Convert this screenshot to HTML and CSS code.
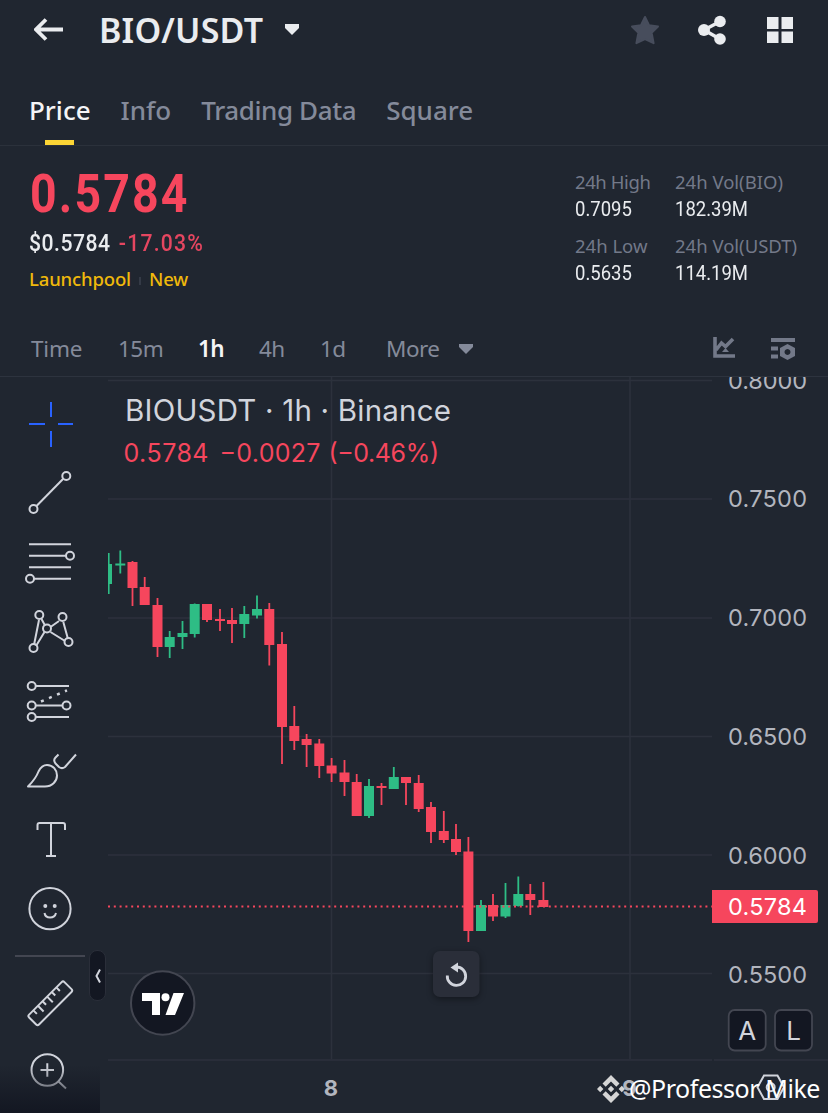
FILE: index.html
```html
<!DOCTYPE html>
<html lang="en">
<head>
    <meta charset="UTF-8">
    <meta name="viewport" content="width=device-width, initial-scale=1.0">
    <title>BIO/USDT</title>
    <link rel="stylesheet" href="styles.css">
</head>
<body>
    <!-- Header -->
    <div class="header">
        <svg class="back" width="30" height="24" viewBox="0 0 30 24"><path d="M12 1.5 2 11.5l10 10M2 11.5h27" fill="none" stroke="#eaecef" stroke-width="3.8"/></svg>
        <h1 class="pair">BIO/USDT</h1>
        <svg class="caret" width="16" height="12" viewBox="0 0 16 12"><path d="M1 0h14v4L8 11 1 4z" fill="#eaecef"/></svg>
        <div class="actions">
            <svg class="star" width="30" height="30" viewBox="0 0 30 30"><path d="m15 2 4 8.200 9 1.300-6.400 6.200 2 10.500L15 24.200l-8.600 4 2-10.500L2 11.500l9-1.300z" fill="#474d5c" stroke="#474d5c" stroke-width="2" stroke-linejoin="round"/></svg>
            <svg class="share" width="30" height="30" viewBox="0 0 30 30"><g fill="#eaecef"><circle cx="7" cy="15" r="6"/><circle cx="23" cy="6.500" r="5.800"/><circle cx="23" cy="24" r="5.800"/></g><path d="M23 6.500 7 15l16 9" fill="none" stroke="#eaecef" stroke-width="3.500"/></svg>
            <svg width="26" height="26" viewBox="0 0 26 26"><path d="M0 0h11.500v12H0zM14.500 0H26v12H14.500zM0 14.500h11.500V26H0zM14.500 14.500H26V26H14.500z" fill="#eaecef"/></svg>
        </div>
    </div>

    <!-- Tabs -->
    <div class="tabs">
        <span class="tab active">Price</span>
        <span class="tab">Info</span>
        <span class="tab trading">Trading Data</span>
        <span class="tab">Square</span>
    </div>

    <!-- Price summary -->
    <div class="summary">
        <div class="summary-left">
            <div class="last-price">0.5784</div>
            <div class="fiat"><span class="usd">$0.5784</span><span class="change">-17.03%</span></div>
            <div class="tags"><span class="tag">Launchpool</span><span class="tag-sep"></span><span class="tag">New</span></div>
        </div>
        <div class="stats">
            <div class="stat"><span class="label tight">24h High</span><span class="value">0.7095</span></div>
            <div class="stat"><span class="label">24h Vol(BIO)</span><span class="value">182.39M</span></div>
            <div class="stat"><span class="label">24h Low</span><span class="value">0.5635</span></div>
            <div class="stat"><span class="label">24h Vol(USDT)</span><span class="value">114.19M</span></div>
        </div>
    </div>

    <!-- Intervals -->
    <div class="intervals">
        <span class="i-time">Time</span>
        <span class="i-15m">15m</span>
        <span class="i-1h active">1h</span>
        <span class="i-4h">4h</span>
        <span class="i-1d">1d</span>
        <span class="i-more">More</span>
        <svg class="caret-small" width="14" height="10" viewBox="0 0 14 10"><path d="M0 0h14v3L7 10 0 3z" fill="#848a9a"/></svg>
        <div class="interval-icons">
            <svg width="22" height="22" viewBox="0 0 22 22"><path d="M2 0v19h20M3 13l5.500-7 4 3.500L20 2" fill="none" stroke="#737989" stroke-width="3.600"/><path d="M9 15l3.500-4 3.500 4z" fill="#737989"/></svg>
            <svg width="25" height="24" viewBox="0 0 25 24"><path d="M0 1h24v4H0zM0 9.500h7v4H0zM0 17.500h7v4H0z" fill="#737989"/><path d="m16.500 7 7.500 4v8l-7.500 4L9 19v-8zm0 5a3 3 0 1 0 .01 0z" fill="#737989" fill-rule="evenodd"/></svg>
        </div>
    </div>

    <!-- Chart area -->
    <div class="chart-area">
        <div class="toolbar">
            <div class="tools">
                <!-- Crosshair -->
                <svg class="tool cross" viewBox="0 -34 100 68"><path d="M51-22v15M51 7v16M29 0h16M58 0h15"/></svg>
                <!-- Trend line -->
                <svg class="tool" viewBox="0 -34 100 68"><path d="M36.500 13 63-14"/><circle cx="33.500" cy="16" r="4"/><circle cx="66.300" cy="-17" r="4"/></svg>
                <!-- Fib retracement -->
                <svg class="tool" viewBox="0 -34 100 68"><path d="M29-18.800h42M29-7.200h37M29 4.300h42M34 15.800h37"/><circle cx="70" cy="-7.200" r="4"/><circle cx="30" cy="15.800" r="4"/></svg>
                <!-- Pattern -->
                <svg class="tool" viewBox="0 -34 100 68"><path d="m34 13 5-25M41.500-13l3.500 6.500M44.500 0 36 14M50.500-5l8.500-6M50.500 0 65 9M63.300-10 68 7"/><circle cx="39.300" cy="-17" r="4"/><circle cx="62.500" cy="-15" r="4"/><circle cx="47" cy="-3.500" r="4"/><circle cx="33.500" cy="16" r="4"/><circle cx="68.500" cy="10" r="4"/></svg>
                <!-- Position -->
                <svg class="tool" viewBox="0 -34 100 68"><path d="M36-15h33M36 4.500h26M36 16h33"/><path class="dots" d="M41 .500 67-10.600"/><circle cx="31.700" cy="-15" r="4"/><circle cx="31.700" cy="4.500" r="4"/><circle cx="31.700" cy="16" r="4"/><circle cx="66.500" cy="4.500" r="4"/></svg>
                <!-- Brush -->
                <svg class="tool" viewBox="0 -34 100 68"><path d="M28 16.500c6-6 9-11 10.500-15C40.500-2.500 43.500-5 47-5c6 0 10 5 10 10.500 0 6-5 11-12 11zM58.500-15.500l-3 3c-1.500 1.500-1.500 4 0 6L59-3c2 1.500 4 1.500 6 0l11-12.500"/></svg>
                <!-- Text -->
                <svg class="tool" viewBox="0 -34 100 68"><path d="M37.500-10v-5q0-2 2-2h23.500q2 0 2 2v5M51-17v33M46 16h10"/></svg>
                <!-- Emoji -->
                <svg class="tool" viewBox="0 -34 100 68"><circle cx="50" cy="-.3" r="20.600"/><circle class="solid" cx="45.300" cy="-3" r="1"/><circle class="solid" cx="54.700" cy="-3" r="1"/><path d="M44.500 4c1 6 10 6 11.500 0"/></svg>
            </div>
            <div class="divider"></div>
            <div class="tools-bottom">
                <!-- Ruler -->
                <svg class="tool" viewBox="0 -34 100 68"><g transform="translate(50.300 .300) rotate(-45)"><rect x="-25" y="-7" width="50" height="14" rx="2"/><path d="M-17-7v5M-10.500-7v8M-4-7v5M2.500-7v8M9-7v5M15.500-7v5"/></g></svg>
                <!-- Zoom in -->
                <svg class="tool" viewBox="0 -34 100 68"><circle cx="47.300" cy="-1" r="15.800"/><path d="M58.500 10.500 66 17.500M40.500-1h13.500M47.300-7.800V5.800"/></svg>
            </div>
            <div class="fade"></div>
            <div class="collapse"><svg width="6" height="14" viewBox="0 0 6 14"><path d="M5 .5 1.500 7 5 13.500" fill="none" stroke="#d1d4dc" stroke-width="2"/></svg></div>
        </div>

        <svg class="chart" width="720" height="736" viewBox="108 377 720 736">
            <!-- Grid -->
            <path class="grid" d="M108 380.500h604M108 499h604M108 618h604M108 736.500h604M108 855h604M108 973.500h604M331.500 377v682M630 377v682M108 1060h604M714 1060h114"/>

            <!-- Rising candles -->
            <path class="wick up" d="M108.700 553v41M120.300 550.500v23M169.700 631v27M182.500 621v28M194.700 603.500v34M244.300 606v32M257 595.500v23M369 779v39M393.800 767v22M481 900v31M505.500 883v35M518.300 876.500v30"/>
            <path class="candle up" d="M108 564h4v20h-4zM115.300 563.500h10v2h-10zM164.700 637h10v10h-10zM177.500 633h10v4h-10zM189.700 604h10v30h-10zM239.300 614h10v10h-10zM252 609h10v6.500h-10zM364 786h10v30h-10zM388.800 777h10v12h-10zM476 905h10v26h-10zM500.500 905h10v11.500h-10zM513.300 894h10v12h-10z"/>

            <!-- Falling candles -->
            <path class="wick down" d="M132.500 561v45M144.700 577v28M157.500 598v59M207 604v18M220 609v22M232 608v35M269.300 603v62.500M282 632v132M294.300 706v44M306.600 734v33M319.300 739v39M331.600 758v24M344.500 760v36M356.700 774v42M381.500 783v22M406 777v28M418.700 775v37M431 802v41M443.800 811v32M456 824v31M468.400 837v105M493 894v27M530.300 884v31M543.400 882v25"/>
            <path class="candle down" d="M127.500 562h10v26h-10zM139.700 587h10v18h-10zM152.500 605h10v42h-10zM202 604h10v16h-10zM215 619h10v2h-10zM227 620h10v4h-10zM264.300 609h10v36h-10zM277 644h10v83h-10zM289.300 726h10v15h-10zM301.600 739h10v6h-10zM314.300 743.500h10v22.500h-10zM326.600 765.500h10v8h-10zM339.500 772.500h10v9.500h-10zM351.700 782h10v34h-10zM376.500 786h10v2h-10zM401 777h10v6h-10zM413.700 783h10v26h-10zM426 807h10v25h-10zM438.800 831h10v9h-10zM451 839h10v13h-10zM463.400 851.500h10v79.500h-10zM488 905h10v11.500h-10zM525.300 894h10v6h-10zM538.400 900h10v7h-10z"/>

            <path class="price-line" d="M108 906.500h604"/>

            <!-- Legend -->
            <text class="legend-title" x="125" y="420.600" textLength="326">BIOUSDT · 1h · Binance</text>
            <text class="legend-value" x="123.500" y="462" textLength="85">0.5784</text>
            <text class="legend-value" x="219.500" y="462" textLength="101">−0.0027</text>
            <text class="legend-value" x="328.500" y="462" textLength="110.500">(−0.46%)</text>

            <!-- Price axis -->
            <text class="axis" x="728" y="389" textLength="79">0.8000</text>
            <text class="axis" x="728" y="507.400" textLength="79">0.7500</text>
            <text class="axis" x="728" y="626.400" textLength="79">0.7000</text>
            <text class="axis" x="728" y="745" textLength="79">0.6500</text>
            <text class="axis" x="728" y="864" textLength="79">0.6000</text>
            <text class="axis" x="728" y="982.500" textLength="79">0.5500</text>
            <path class="down" d="M712 890h104a2 2 0 0 1 2 2v29a2 2 0 0 1-2 2H712z"/>
            <text class="axis current" x="728" y="915" textLength="79">0.5784</text>

            <!-- Scale buttons -->
            <rect class="scale-btn" x="728.700" y="1010" width="37" height="40.500" rx="6"/>
            <rect class="scale-btn" x="775" y="1010" width="37" height="40.500" rx="6"/>
            <text class="scale-text" x="747.200" y="1039.500">A</text>
            <text class="scale-text" x="793.500" y="1039.500">L</text>

            <!-- Time axis -->
            <text class="day" x="331" y="1096">8</text>
            <text class="day" x="629.500" y="1096">9</text>
            <path class="settings" d="M764 1075.500h13.500l6.500 11.800-6.500 11.700H764l-6.500-11.700z"/>
            <circle class="settings" cx="770.700" cy="1087.300" r="4"/>

            <!-- Reset button -->
            <rect class="reset" x="433" y="951" width="46.500" height="46" rx="7"/>
            <path d="M447.300 975.500a9.200 9.200 0 1 0 9.200-8.500h-2" fill="none" stroke="#d1d4dc" stroke-width="2.800"/>
            <path d="m450.500 967.500 7.500-5v10z" fill="#d1d4dc"/>

            <!-- TradingView logo -->
            <circle cx="162.700" cy="1003" r="31.700" fill="#131722" stroke="#434651" stroke-width="2"/>
            <path d="M142 993h18v22h-8v-14h-10zM173.500 993H184l-9 22h-9.500z" fill="#fff"/>
            <circle cx="165.500" cy="997.300" r="4" fill="#fff"/>
        </svg>
    </div>

    <!-- Watermark -->
    <div class="watermark">
        <svg width="28" height="28" viewBox="0 0 28 28"><path d="m14 0 8.500 8.500-3.200 3.200L14 6.400l-5.300 5.300-3.200-3.200zM14 28l-8.500-8.500 3.200-3.200 5.300 5.300 5.300-5.300 3.200 3.200zM14 10.800l3.200 3.200-3.200 3.200-3.200-3.200zM3.200 10.800 6.400 14l-3.200 3.200L0 14zM24.800 10.800 28 14l-3.200 3.200-3.200-3.200z" fill="#d5d5d5"/></svg>
        <span>@Professor Mike</span>
    </div>
</body>
</html>
```

FILE: styles.css
```css
/* Global Styles */
* {
    box-sizing: border-box;
}

body {
    margin: 0;
    width: 828px;
    height: 1113px;
    position: relative;
    overflow: hidden;
    background: #202630;
    color: #eaecef;
    font-family: "Noto Sans", sans-serif;
}

svg {
    display: block;
    flex: none;
}

span {
    white-space: nowrap;
}

/* Header */
.header {
    display: flex;
    align-items: center;
    height: 60px;
    padding: 0 35px 0 34px;
}

.pair {
    margin: 0 0 0 35px;
    font-size: 34px;
    font-weight: 600;
    letter-spacing: 0.2px;
    width: 164px;
    white-space: nowrap;
}

.caret {
    margin-left: 21px;
}

.actions {
    display: flex;
    align-items: center;
    margin-left: auto;
}

.star {
    margin-right: 37px;
}

.share {
    margin-right: 40px;
}

/* Tabs */
.tabs {
    display: flex;
    height: 86px;
    padding: 27px 0 0 29px;
    gap: 30px;
    border-bottom: 1px solid #2b313b;
    font-size: 26px;
    line-height: 46px;
    font-weight: 500;
    color: #848a9a;
}

.tab.trading {
    letter-spacing: -0.4px;
}

.tab.active {
    color: #f5f5f7;
    display: flex;
    flex-direction: column;
    align-items: center;
}

.tab.active::after {
    content: "";
    width: 29px;
    height: 5px;
    margin-top: auto;
    background: #fcd535;
    flex: none;
}

/* Price summary */
.summary {
    display: flex;
    justify-content: space-between;
    height: 174px;
    padding: 19px 29px 0 29px;
}

/* Numbers are set slightly condensed */
.last-price,
.fiat,
.value {
    font-family: Roboto, sans-serif;
    transform-origin: left center;
}

.last-price {
    width: 180px;
    margin-left: 1px;
    font-size: 54px;
    line-height: 58px;
    font-weight: 700;
    letter-spacing: 2.5px;
    color: #f6465d;
    transform: scaleX(0.86);
}

.fiat {
    display: flex;
    gap: 9px;
    width: 188px;
    margin-top: 6px;
    font-size: 23px;
    line-height: 30px;
    font-weight: 500;
    letter-spacing: 0.55px;
    color: #eaecef;
    transform: scaleX(0.92);
}

.change {
    color: #e54660;
    letter-spacing: 1.3px;
}

.tags {
    display: flex;
    align-items: center;
    margin-top: 6px;
    font-size: 18.500px;
    line-height: 28px;
    font-weight: 500;
    letter-spacing: -0.15px;
    color: #f0b90b;
}

.tag-sep {
    width: 2px;
    height: 8px;
    margin: 3px 8px 0;
    background: #343a46;
}

.stats {
    display: grid;
    grid-template-columns: 100px 124px;
    grid-template-rows: 63.500px 63.500px;
    padding-top: 3px;
}

.stat {
    display: flex;
    flex-direction: column;
    font-size: 18.500px;
    line-height: 28px;
}

.label {
    color: #737989;
}

.label.tight {
    letter-spacing: -0.4px;
}

.value {
    width: 90px;
    margin-top: -1px;
    color: #eaecef;
    font-size: 20px;
    transform: scaleX(0.925);
}

/* Intervals */
.intervals {
    display: flex;
    align-items: center;
    height: 57px;
    padding: 1px 32px 0 31px;
    border-bottom: 1px solid #2d333e;
    font-size: 22.500px;
    letter-spacing: -0.5px;
    color: #848a9a;
}

.intervals .active {
    color: #f5f5f7;
    font-weight: 600;
}

.i-time {
    width: 87px;
    letter-spacing: -0.2px;
}

.i-15m {
    width: 80px;
}

.i-1h {
    width: 61px;
}

.i-4h {
    width: 61px;
}

.i-1d {
    width: 66px;
}

.i-more {
    width: 73px;
}

.interval-icons {
    display: flex;
    gap: 36px;
    margin-left: auto;
}

/* Chart area */
.chart-area {
    display: flex;
    height: 736px;
}

.toolbar {
    position: relative;
    width: 108px;
    padding-top: 13px;
}

.tools {
    display: flex;
    flex-direction: column;
    justify-content: space-between;
    height: 553px;
}

.tool {
    width: 100px;
    height: 68px;
    fill: none;
    stroke: #d1d4dc;
    stroke-width: 2;
    stroke-linejoin: round;
}

.tool.cross {
    stroke: #2962ff;
}

.tool .dots {
    stroke-width: 2.5;
    stroke-dasharray: 3 5.700;
}

.tool .solid {
    fill: #d1d4dc;
}

.divider {
    width: 70px;
    height: 2px;
    margin: 12px 0 12px 15px;
    background: #434651;
}

.tools-bottom {
    height: 144px;
}

.fade {
    position: absolute;
    left: 0;
    bottom: 0;
    width: 100px;
    height: 48px;
    background: linear-gradient(rgba(19, 23, 34, 0), #131722);
}

.collapse {
    position: absolute;
    left: 89px;
    top: 573px;
    width: 17px;
    height: 51px;
    display: flex;
    align-items: center;
    justify-content: center;
    background: #131722;
    border: 1.500px solid #2a2e39;
    border-radius: 8px;
}

.chart {
    font-family: Inter, sans-serif;
}

.grid {
    stroke: #2c313c;
    stroke-width: 1.600;
}

.wick {
    stroke-width: 1.800;
}

.wick.up {
    stroke: #2ebd85;
}

.wick.down {
    fill: none;
    stroke: #f6465d;
}

.candle.up {
    fill: #2ebd85;
}

.down {
    fill: #f6465d;
}

.price-line {
    stroke: #f6465d;
    stroke-width: 2;
    stroke-dasharray: 2 3.800;
}

.legend-title {
    font-size: 29.500px;
    fill: #d1d4dc;
}

.legend-value {
    font-size: 25px;
    fill: #f6465d;
}

.axis {
    font-size: 23.500px;
    fill: #b2b5be;
}

.axis.current {
    fill: #fff;
}

.scale-btn {
    fill: #131722;
    stroke: #434651;
    stroke-width: 1.800;
}

.scale-text {
    font-size: 26px;
    fill: #d1d4dc;
    text-anchor: middle;
}

.day {
    font-size: 22px;
    font-weight: 700;
    fill: #b2b5be;
    text-anchor: middle;
}

.settings {
    fill: none;
    stroke: #d1d4dc;
    stroke-width: 2;
}

.reset {
    fill: #2a2e39;
    filter: drop-shadow(0 2px 3px rgba(0, 0, 0, 0.4));
}

/* Watermark */
.watermark {
    position: absolute;
    left: 597px;
    top: 1071px;
    display: flex;
    align-items: center;
    gap: 4px;
    font-size: 25px;
    line-height: 35px;
    letter-spacing: -0.450px;
    color: #fff;
}
```
